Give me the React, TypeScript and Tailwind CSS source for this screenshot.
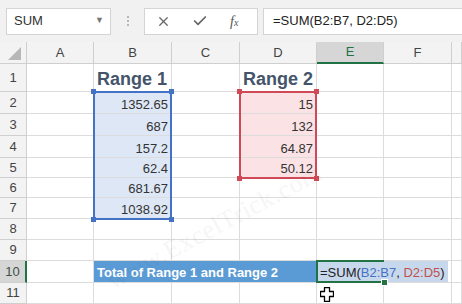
import { Check, X } from "lucide-react";

const cols = ["A", "B", "C", "D", "E", "F", ""];
const rowNums = [1, 2, 3, 4, 5, 6, 7, 8, 9, 10, 11];

const range1: Record<number, string> = {
  2: "1352.65",
  3: "687",
  4: "157.2",
  5: "62.4",
  6: "681.67",
  7: "1038.92",
};
const range2: Record<number, string> = { 2: "15", 3: "132", 4: "64.87", 5: "50.12" };

const font = { fontFamily: '"Liberation Sans", Arial, sans-serif' };
const gridTpl =
  "grid grid-cols-[27px_67px_78px_68px_77px_67px_68px_1fr] grid-rows-[22px_28px_22px_22px_22px_20px_20px_21px_21px_21px_22px_21px]";

function Handle({ className, color }: { className: string; color: string }) {
  return <span className={`absolute h-[5px] w-[5px] ${color} ${className}`} />;
}

function Toolbar() {
  return (
    <div className="flex h-[42px] items-center bg-[#f1f1f1] pl-[6px]">
      <div className="flex h-[27px] w-[105px] items-center justify-between border border-[#d4d4d4] bg-white pl-[7px] pr-[6px] text-[13px] text-[#333]">
        <span>SUM</span>
        <span className="text-[9px] text-[#777]">▼</span>
      </div>
      <div className="flex w-[33px] flex-col items-center gap-[2px]">
        <span className="h-[2px] w-[2px] bg-[#b9b9b9]" />
        <span className="h-[2px] w-[2px] bg-[#b9b9b9]" />
        <span className="h-[2px] w-[2px] bg-[#b9b9b9]" />
      </div>
      <div className="flex h-[27px] w-[114px] items-center border border-[#d4d4d4] bg-white pl-[11px] text-[#666]">
        <X className="h-[15px] w-[15px]" strokeWidth={2} />
        <Check className="ml-[21px] h-[16px] w-[16px]" strokeWidth={2.6} />
        <span
          className="ml-[22px] text-[14px] italic text-[#555]"
          style={{ fontFamily: '"Liberation Serif", serif' }}
        >
          f<span className="text-[10px]">x</span>
        </span>
      </div>
      <div className="ml-[5px] flex h-[27px] flex-1 items-center border border-r-0 border-[#d4d4d4] bg-white pl-[9px] text-[13px] text-[#222]">
        =SUM(B2:B7, D2:D5)
      </div>
    </div>
  );
}

function Cursor() {
  return (
    <svg width="14" height="15" viewBox="0 0 14 15" className="absolute left-[320px] top-[245px]">
      <path
        d="M4.5 0.5h5v4h4v5h-4v5h-5v-5h-4v-5h4z"
        fill="white"
        stroke="black"
        strokeWidth="1.3"
        strokeLinejoin="round"
      />
    </svg>
  );
}

function RowCells({ r }: { r: number }) {
  const base = "border-r border-b border-[#dcdcdc]";
  const num = "flex items-end justify-end pr-[3px] pb-[1px] text-[13px] leading-[15px] text-[#333]";

  const header =
    r === 10 ? (
      <div className="flex items-center justify-center border-r-2 border-b border-r-[#217346] border-b-[#cfcfcf] bg-[#d6d6d6] text-[13px] text-[#3f4f45]">
        {r}
      </div>
    ) : (
      <div className="flex items-center justify-center border-r border-b border-[#cfcfcf] bg-[#f3f3f3] text-[13px] text-[#444]">
        {r}
      </div>
    );

  if (r === 1) {
    return (
      <>
        {header}
        <div className={base} />
        <div className={`${base} flex items-end pl-[3px] pb-[2px] text-[18px] font-bold leading-[20px] text-[#44546a]`}>
          Range 1
        </div>
        <div className={base} />
        <div className={`${base} flex items-end pl-[3px] pb-[2px] text-[18px] font-bold leading-[20px] text-[#44546a]`}>
          Range 2
        </div>
        <div className={base} />
        <div className={base} />
        <div className={base} />
      </>
    );
  }

  if (r === 10) {
    return (
      <>
        {header}
        <div className={base} />
        <div className="col-span-3 flex items-end border-b border-[#dcdcdc] bg-[#5b9bd5] pb-[2px] pl-[3px] text-[13px] font-bold leading-[15px] text-white">
          Total of Range 1 and Range 2
        </div>
        <div className="col-span-2 flex border-b border-[#dcdcdc]">
          <span className="flex h-full items-end whitespace-nowrap bg-[#c8d8ec] pb-[2px] pl-[3px] pr-[3px] text-[13px] leading-[15px] text-[#222]">
            =SUM(<span className="text-[#4472c4]">B2:B7</span>,&nbsp;
            <span className="text-[#c0504d]">D2:D5</span>)
          </span>
          <span className="flex-1 border-r border-[#dcdcdc]" />
        </div>
        <div className={base} />
      </>
    );
  }

  const v1 = range1[r];
  const v2 = range2[r];
  return (
    <>
      {header}
      <div className={base} />
      <div className={`${base} ${num} ${v1 ? "bg-[#dde7f5]" : ""}`}>{v1}</div>
      <div className={base} />
      <div className={`${base} ${num} ${v2 ? "bg-[#fbe3e5]" : ""}`}>{v2}</div>
      <div className={base} />
      <div className={base} />
      <div className={base} />
    </>
  );
}

export default function App() {
  return (
    <div className="h-[304px] w-[462px] overflow-hidden bg-white" style={font}>
      <Toolbar />
      <div className="relative">
        <div className={gridTpl}>
          {/* corner */}
          <div className="relative border-r border-b border-[#cfcfcf] bg-[#f3f3f3]">
            <svg width="14" height="13" className="absolute right-[4px] bottom-[3px]">
              <path d="M13 0v13H0z" fill="#b7b7b7" />
            </svg>
          </div>
          {cols.map((c, i) =>
            c === "E" ? (
              <div
                key={i}
                className="flex items-center justify-center border-r border-b-2 border-r-[#cfcfcf] border-b-[#217346] bg-[#d6d6d6] text-[13px] text-[#217346]"
              >
                {c}
              </div>
            ) : (
              <div
                key={i}
                className="flex items-center justify-center border-r border-b border-[#cfcfcf] bg-[#f3f3f3] text-[13px] text-[#444]"
              >
                {c}
              </div>
            )
          )}
          {rowNums.map((r) => (
            <RowCells key={r} r={r} />
          ))}
        </div>

        {/* selection overlays, same grid template */}
        <div className={`pointer-events-none absolute inset-0 ${gridTpl}`}>
          <div className="relative col-start-3 row-start-3 row-span-6 -mt-px -ml-px -mb-px border-2 border-[#4472c4]">
            <Handle color="bg-[#4472c4]" className="-left-[4px] -top-[4px]" />
            <Handle color="bg-[#4472c4]" className="-right-[4px] -top-[4px]" />
            <Handle color="bg-[#4472c4]" className="-left-[4px] -bottom-[4px]" />
            <Handle color="bg-[#4472c4]" className="-right-[4px] -bottom-[4px]" />
          </div>
          <div className="relative col-start-5 row-start-3 row-span-4 -mt-px -ml-px -mb-px border-2 border-[#cf4a56]">
            <Handle color="bg-[#cf4a56]" className="-left-[4px] -top-[4px]" />
            <Handle color="bg-[#cf4a56]" className="-right-[4px] -top-[4px]" />
            <Handle color="bg-[#cf4a56]" className="-left-[4px] -bottom-[4px]" />
            <Handle color="bg-[#cf4a56]" className="-right-[4px] -bottom-[4px]" />
          </div>
          <div className="relative col-start-6 row-start-11 -mt-px -ml-px border-2 border-r-0 border-[#217346]">
            <span className="absolute -right-[3px] -bottom-[4px] h-[5px] w-[5px] bg-[#217346] ring-1 ring-white" />
          </div>
        </div>

        <div
          className="pointer-events-none absolute left-[95px] top-[165px] -rotate-[28deg] text-[26px] tracking-wide text-[#000] opacity-[0.03]"
          style={{ fontFamily: '"Liberation Serif", serif' }}
        >
          www.ExcelTrick.com
        </div>
        <Cursor />
      </div>
    </div>
  );
}
